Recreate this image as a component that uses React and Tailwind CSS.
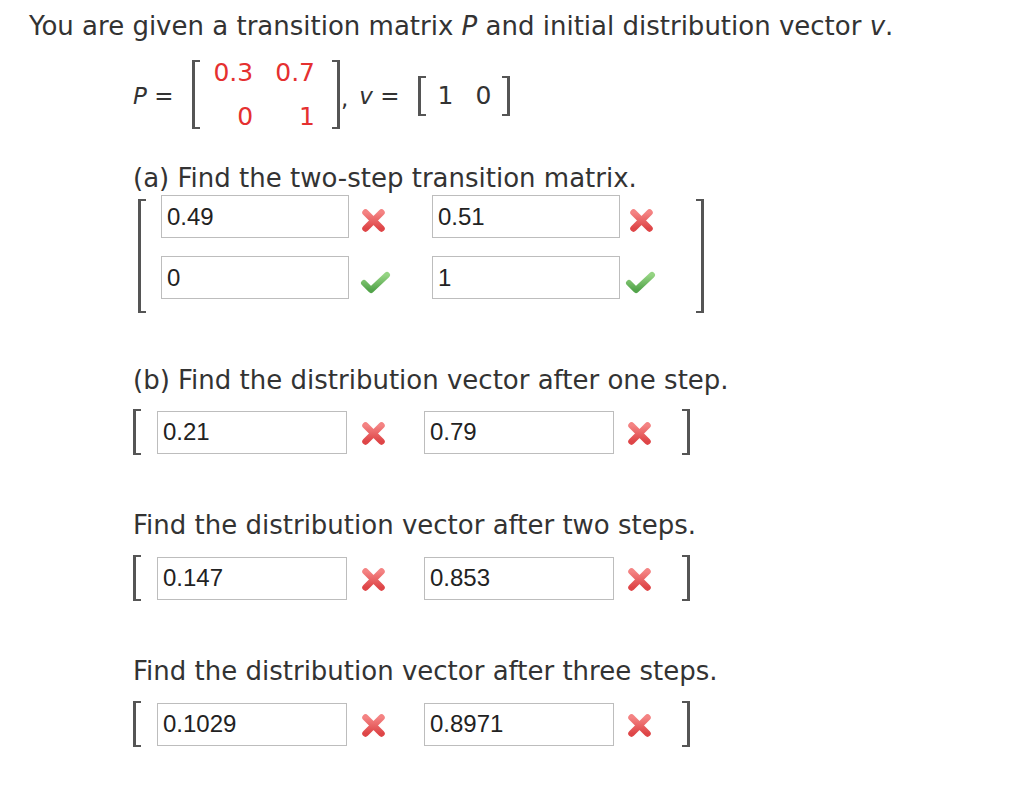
import React from "react";

const XIcon = () => (
  <svg width="27" height="25" viewBox="0 0 27 25" className="shrink-0">
    <defs>
      <linearGradient id="xg" x1="0" y1="0" x2="0" y2="1">
        <stop offset="0" stopColor="#f48383" />
        <stop offset="1" stopColor="#de4547" />
      </linearGradient>
    </defs>
    <path d="M5.5 4.5 L21.5 20.5 M21.5 4.5 L5.5 20.5" stroke="url(#xg)" strokeWidth="6.5" strokeLinecap="round" fill="none" />
  </svg>
);

const CheckIcon = () => (
  <svg width="31" height="25" viewBox="0 0 31 25" className="shrink-0">
    <defs>
      <linearGradient id="cg" x1="0" y1="0" x2="0" y2="1">
        <stop offset="0" stopColor="#95d483" />
        <stop offset="1" stopColor="#53a44b" />
      </linearGradient>
    </defs>
    <path d="M4 13 L11 20 L27 5" stroke="url(#cg)" strokeWidth="6" strokeLinecap="round" strokeLinejoin="round" fill="none" />
  </svg>
);

const LB = ({ h }) => (
  <div className={`w-[8px] border-l-[3px] border-t-[2px] border-b-[2px] border-[#555] ${h}`} />
);
const RB = ({ h }) => (
  <div className={`w-[8px] border-r-[3px] border-t-[2px] border-b-[2px] border-[#555] ${h}`} />
);

const Box = ({ v, w = "w-[189px]" }) => (
  <div
    className={`${w} h-[43px] border border-[#bdbdbd] bg-white flex items-center pl-[5px] text-[24px] text-[#222]`}
    style={{ fontFamily: '"Liberation Sans", Arial, sans-serif' }}
  >
    {v}
  </div>
);

const Heading = ({ children, mt }) => (
  <p className={`ml-[133px] ${mt} text-[26px] leading-[32px] whitespace-nowrap`}>{children}</p>
);

const VecRow = ({ a, b, mt }) => (
  <div className={`ml-[133px] ${mt} flex items-center h-[46px]`}>
    <LB h="h-[46px]" />
    <div className="ml-[16px]">
      <Box v={a} w="w-[190px]" />
    </div>
    <div className="ml-[13px] mt-[3px]"><XIcon /></div>
    <div className="ml-[37px]">
      <Box v={b} w="w-[190px]" />
    </div>
    <div className="ml-[12px] mt-[3px]"><XIcon /></div>
    <div className="ml-[29px]"><RB h="h-[46px]" /></div>
  </div>
);

export default function App() {
  return (
    <div
      className="w-[1036px] h-[802px] bg-white text-[#333] overflow-hidden"
      style={{ fontFamily: '"DejaVu Sans", Verdana, sans-serif' }}
    >
      <p className="pl-[29px] pt-[10px] text-[26px] leading-[32px] whitespace-nowrap">
        You are given a transition matrix <i>P</i> and initial distribution vector <i>v</i>.
      </p>

      <div className="ml-[133px] mt-[18px] flex items-center h-[69px] text-[23px]">
        <span className="mt-[3px]"><i>P</i> =</span>
        <div className="ml-[19px] flex items-stretch h-[69px]">
          <LB h="h-[69px]" />
          <div className="grid grid-cols-[auto_auto] gap-x-[22px] content-center gap-y-[12px] pl-[13px] pr-[17px] text-[#e53030] text-right leading-[32px] text-[25px]">
            <span>0.3</span>
            <span>0.7</span>
            <span>0</span>
            <span>1</span>
          </div>
          <RB h="h-[69px]" />
        </div>
        <span className="ml-[1px] mt-[8px]">,</span>
        <span className="ml-[11px] mt-[3px]"><i>v</i> =</span>
        <div className="ml-[18px] flex items-center h-[40px] mt-[3px]">
          <LB h="h-[40px]" />
          <div className="pl-[12px] pr-[11px] flex gap-[22px] text-[25px]">
            <span>1</span>
            <span>0</span>
          </div>
          <RB h="h-[40px]" />
        </div>
      </div>

      <Heading mt="mt-[33px]">(a) Find the two-step transition matrix.</Heading>

      <div className="ml-[138px] mt-[1px] flex h-[120px]">
        <div className="pt-[4px]"><LB h="h-[114px]" /></div>
        <div className="ml-[15px] flex flex-col gap-[18px]">
          <div className="flex items-center">
            <Box v="0.49" w="w-[188px]" />
            <div className="ml-[11px] mt-[7px]"><XIcon /></div>
            <div className="ml-[45px]"><Box v="0.51" w="w-[188px]" /></div>
            <div className="ml-[8px] mt-[7px]"><XIcon /></div>
          </div>
          <div className="flex items-center">
            <Box v="0" w="w-[188px]" />
            <div className="ml-[11px] mt-[9px]"><CheckIcon /></div>
            <div className="ml-[41px]"><Box v="1" w="w-[188px]" /></div>
            <div className="ml-[5px] mt-[9px]"><CheckIcon /></div>
          </div>
        </div>
        <div className="ml-[40px] pt-[4px]"><RB h="h-[114px]" /></div>
      </div>

      <Heading mt="mt-[49px]">(b) Find the distribution vector after one step.</Heading>
      <VecRow a="0.21" b="0.79" mt="mt-[13px]" />

      <Heading mt="mt-[54px]">Find the distribution vector after two steps.</Heading>
      <VecRow a="0.147" b="0.853" mt="mt-[14px]" />

      <Heading mt="mt-[54px]">Find the distribution vector after three steps.</Heading>
      <VecRow a="0.1029" b="0.8971" mt="mt-[14px]" />
    </div>
  );
}
